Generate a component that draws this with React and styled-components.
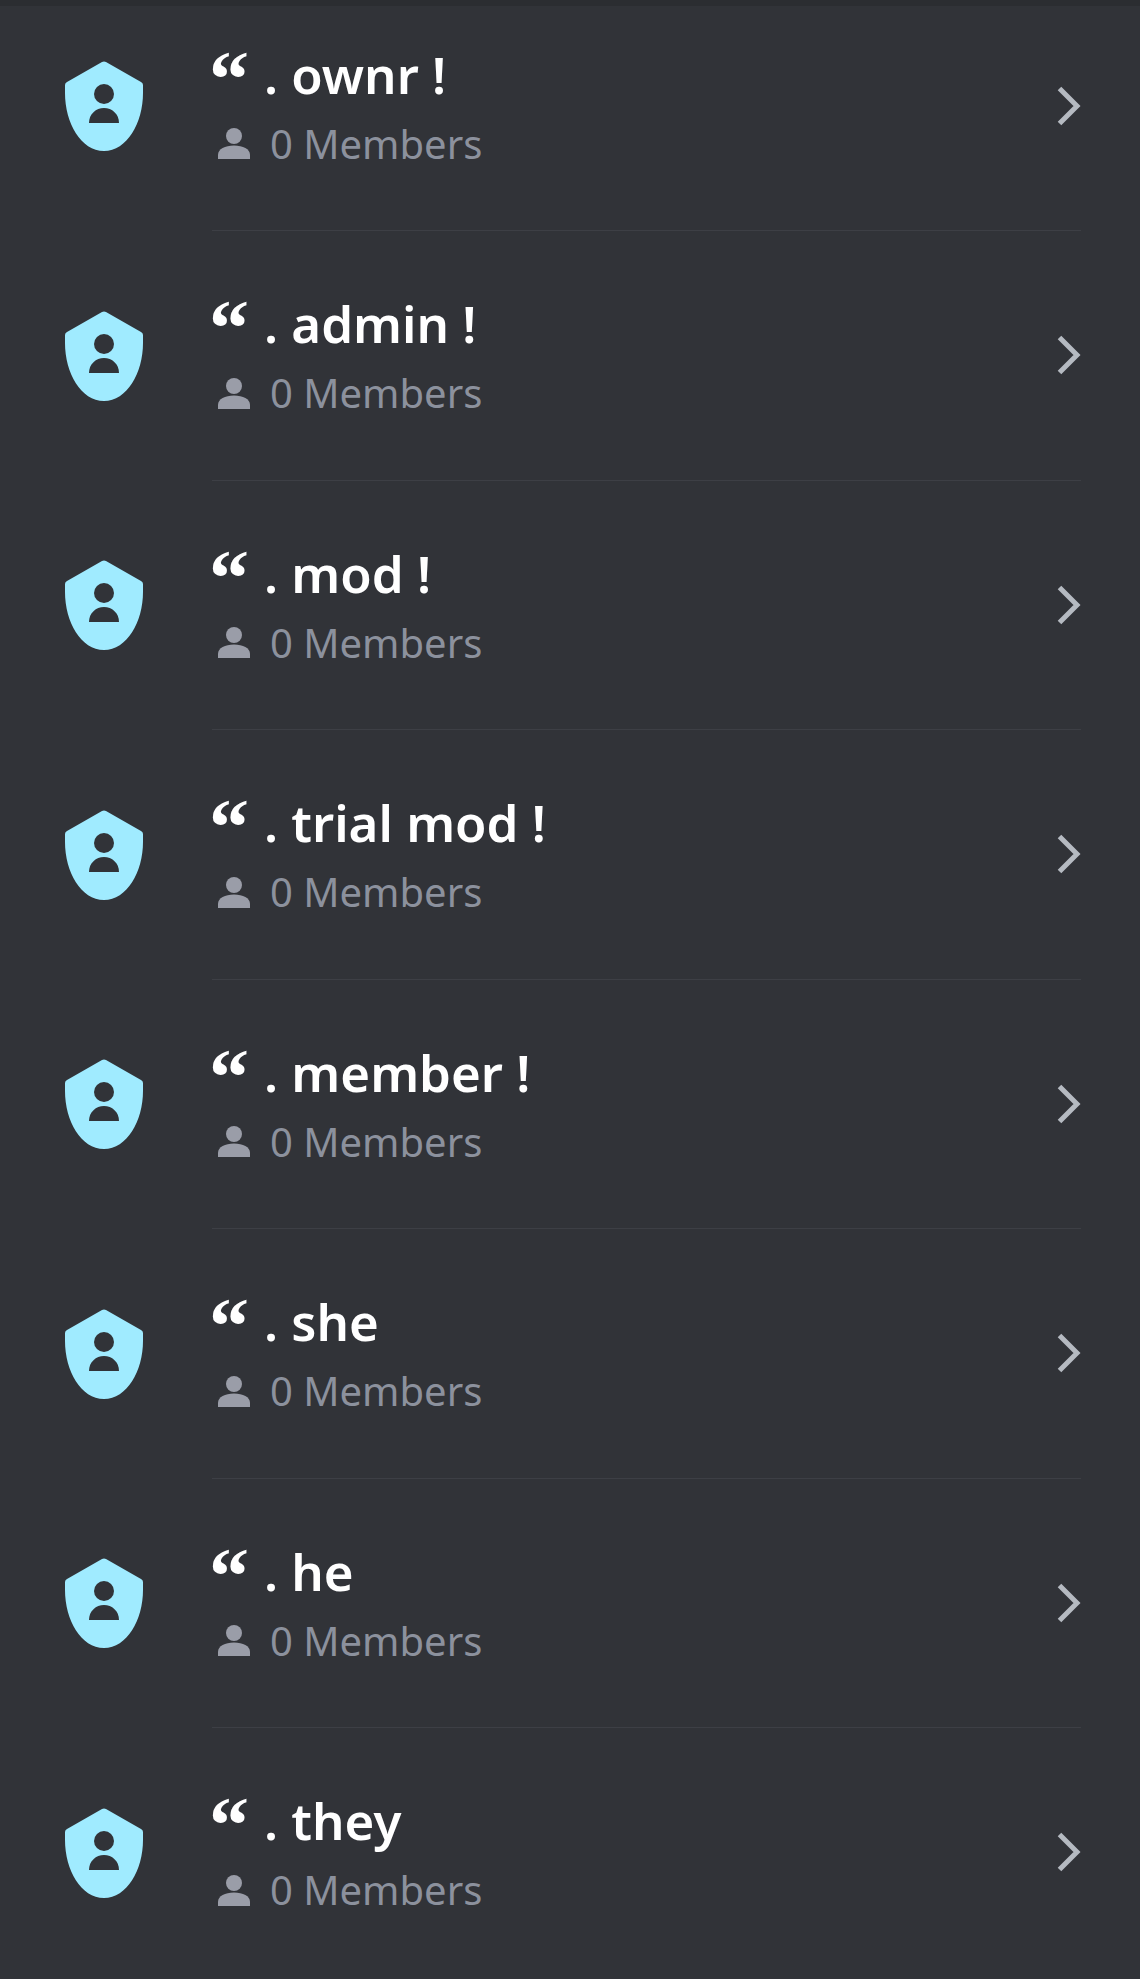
import styled, { createGlobalStyle } from "styled-components";

const roles = [
  ". ownr !",
  ". admin !",
  ". mod !",
  ". trial mod !",
  ". member !",
  ". she",
  ". he",
  ". they",
];

export default function App() {
  return (
    <Page>
      <GlobalStyle />
      <TopStrip />
      <RoleList>
        {roles.map((role, i) => (
          <Row key={role}>
            <IconCell>
              <ShieldIcon />
            </IconCell>
            <Body $last={i === roles.length - 1}>
              <Info>
                <Name>
                  <Quote>“</Quote>
                  {role}
                </Name>
                <Count>
                  <PersonIcon />
                  <span>0 Members</span>
                </Count>
              </Info>
              <Chevron />
            </Body>
          </Row>
        ))}
      </RoleList>
    </Page>
  );
}

function ShieldIcon() {
  return (
    <svg width="78" height="90" viewBox="0 0 78 90">
      <path
        d="M39 0.5 Q40 0.5 41 1 L76 21 Q78 22 78 24 L78 32 C78 62 62 90 39 90 C16 90 0 62 0 32 L0 24 Q0 22 2 21 L37 1 Q38 0.5 39 0.5 Z"
        fill="#a0ebff"
      />
      <circle cx="39" cy="33" r="10" fill="#313338" />
      <path d="M24 62 C24 53 31 47 39 47 C47 47 54 53 54 62 Z" fill="#313338" />
    </svg>
  );
}

function PersonIcon() {
  return (
    <svg width="32" height="31" viewBox="0 0 32 31">
      <circle cx="16" cy="8" r="8" fill="#9a9da8" />
      <path
        d="M0 31 L0 27 C0 21 7 17.5 16 17.5 C25 17.5 32 21 32 27 L32 31 Z"
        fill="#9a9da8"
      />
    </svg>
  );
}

function Chevron() {
  return (
    <ChevronSvg width="26" height="42" viewBox="0 0 26 42">
      <path
        d="M3.5 3.5 L21 21 L3.5 38.5"
        fill="none"
        stroke="#b5bac1"
        strokeWidth="5"
        strokeLinejoin="miter"
      />
    </ChevronSvg>
  );
}

const GlobalStyle = createGlobalStyle`
  html, body {
    margin: 0;
    background: #313338;
  }
`;

const Page = styled.div`
  width: 1140px;
  height: 1979px;
  overflow: hidden;
  background: #313338;
  font-family: "Noto Sans", sans-serif;
`;

const TopStrip = styled.div`
  position: relative;
  z-index: 1;
  height: 6px;
  background: #2b2d31;
`;

const RoleList = styled.div`
  margin-top: -24.5px;
`;

const Row = styled.div`
  display: flex;
  height: 249.5px;
`;

const IconCell = styled.div`
  width: 212px;
  padding-left: 65px;
  box-sizing: border-box;
  display: flex;
  align-items: center;
`;

const Body = styled.div`
  flex: 1;
  margin-right: 59px;
  display: flex;
  align-items: center;
  justify-content: space-between;
  box-sizing: border-box;
  border-bottom: 1px solid ${(p) => (p.$last ? "transparent" : "#3d3f45")};
`;

const Info = styled.div`
  display: flex;
  flex-direction: column;
  gap: 18px;
`;

const Name = styled.div`
  font-size: 51px;
  line-height: 58px;
  font-weight: 600;
  color: #ffffff;
  white-space: nowrap;
`;

const Quote = styled.span`
  display: inline-block;
  width: 55px;
  margin-left: -3px;
  font-family: "Liberation Serif", serif;
  font-size: 80px;
  font-weight: 700;
  line-height: 0;
  vertical-align: -12px;
`;

const Count = styled.div`
  display: flex;
  align-items: center;
  gap: 20px;
  padding-left: 6px;
  font-size: 40px;
  line-height: 46px;
  color: #8c919d;
`;

const ChevronSvg = styled.svg`
  margin-right: -1px;
`;
